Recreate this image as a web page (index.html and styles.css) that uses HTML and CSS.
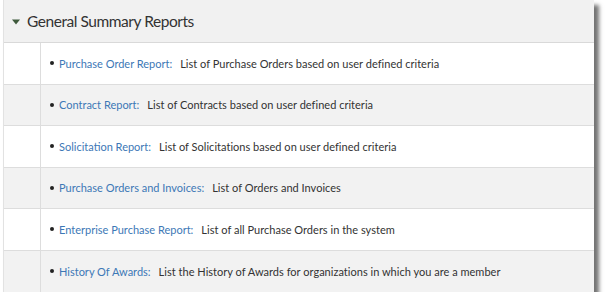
FILE: index.html
```html
<!DOCTYPE html>
<html>
<head>
<meta charset="utf-8">
<link rel="stylesheet" href="styles.css">
</head>
<body>
<div class="panel">
  <div class="panel-header">
    <svg class="caret" width="8" height="6" viewBox="0 0 8 6"><polygon points="0,0.5 8,0.5 4,5.5" fill="#3f5a3c"/></svg>
    <span class="title">General Summary Reports</span>
  </div>
  <div class="rows">
    <div class="row"><div class="gutter"></div><div class="cell"><span class="dot"></span><a class="link">Purchase Order Report:</a><span class="desc">List of Purchase Orders based on user defined criteria</span></div></div>
    <div class="row alt"><div class="gutter"></div><div class="cell"><span class="dot"></span><a class="link">Contract Report:</a><span class="desc">List of Contracts based on user defined criteria</span></div></div>
    <div class="row"><div class="gutter"></div><div class="cell"><span class="dot"></span><a class="link">Solicitation Report:</a><span class="desc">List of Solicitations based on user defined criteria</span></div></div>
    <div class="row alt"><div class="gutter"></div><div class="cell"><span class="dot"></span><a class="link">Purchase Orders and Invoices:</a><span class="desc">List of Orders and Invoices</span></div></div>
    <div class="row"><div class="gutter"></div><div class="cell"><span class="dot"></span><a class="link">Enterprise Purchase Report:</a><span class="desc">List of all Purchase Orders in the system</span></div></div>
    <div class="row alt last"><div class="gutter"></div><div class="cell"><span class="dot"></span><a class="link">History Of Awards:</a><span class="desc">List the History of Awards for organizations in which you are a member</span></div></div>
  </div>
</div>
</body>
</html>
```

FILE: styles.css
```css
html, body {
  margin: 0;
  padding: 0;
  background: #ffffff;
}
body {
  font-family: Lato, "Open Sans", sans-serif;
  color: #333333;
}
.panel {
  margin-left: 3px;
  width: 591px;
  background: #ffffff;
  border-left: 1px solid #e2e2e2;
  box-sizing: border-box;
  box-shadow: 5px 5px 4px rgba(0, 0, 0, 0.55);
}
.panel-header {
  height: 43px;
  box-sizing: border-box;
  background: #f1f1f1;
  border-bottom: 1px solid #d9d9d9;
  display: flex;
  align-items: center;
  padding-left: 8px;
}
.caret {
  margin-right: 7px;
  margin-top: 2px;
}
.title {
  font-size: 15.5px;
  letter-spacing: -0.45px;
  color: #333333;
}
.row {
  display: flex;
  height: 41.5px;
  box-sizing: border-box;
  border-bottom: 1px solid #dddddd;
  background: #ffffff;
}
.row.alt {
  background: #f2f2f2;
}
.row.last {
  border-bottom: none;
}
.gutter {
  width: 36px;
  border-right: 1px solid #dddddd;
  flex: none;
}
.cell {
  display: flex;
  align-items: center;
  padding-left: 9px;
  font-size: 11px;
}
.dot {
  width: 4px;
  height: 4px;
  border-radius: 50%;
  background: #222222;
  margin-right: 5px;
}
.link {
  color: #3d78b6;
  margin-right: 8px;
}
.desc {
  color: #333333;
  letter-spacing: 0.02px;
}
```
